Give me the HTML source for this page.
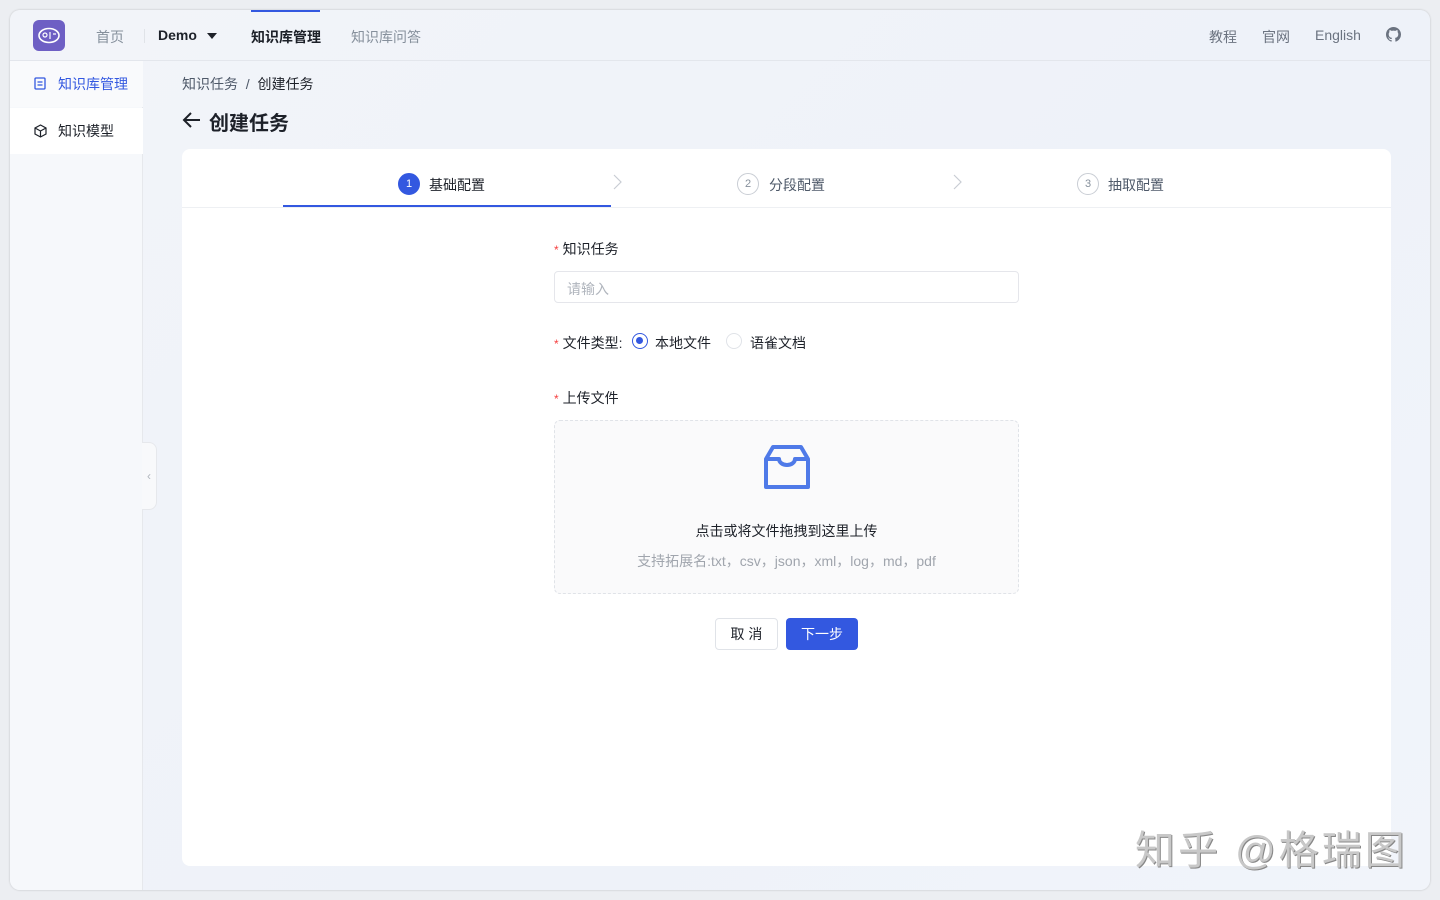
<!DOCTYPE html>
<html><head><meta charset="utf-8"><style>
*{box-sizing:border-box;margin:0;padding:0}
body{width:1440px;height:900px;overflow:hidden;background:#eceef2;font-family:"Liberation Sans","Noto Sans CJK SC",sans-serif;color:#1d2129;position:relative}
.win{position:absolute;left:10px;top:10px;width:1420px;height:880px;border-radius:10px;background:linear-gradient(135deg,#f2f4f9,#eef2f9 60%,#f1f4fa);overflow:hidden;box-shadow:0 0 2px rgba(0,0,0,.2)}
.top{position:absolute;left:0;top:0;width:1420px;height:51px;border-bottom:1px solid #e3e6ec}
.logo{position:absolute;left:23px;top:10px;width:32px;height:31px;border-radius:6px;background:#6e5fc4}
.t{position:absolute;font-size:14px;top:17px}
.side{position:absolute;left:0;top:51px;width:133px;height:829px;background:#f6f8fb;border-right:1px solid #e6e8ec}
.si{position:absolute;left:0;width:133px;height:46px;font-size:14px;line-height:46px;padding-left:48px}
.card{position:absolute;left:172px;top:139px;width:1209px;height:717px;background:#fff;border-radius:8px}
.steps{position:absolute;left:0;top:0;width:1209px;height:59px;border-bottom:1px solid #eef0f3}
.num{position:absolute;width:22px;height:22px;border-radius:50%;font-size:11px;text-align:center;line-height:20px;border:1px solid #c9cdd4;color:#86909c}
.lab{position:absolute;font-size:14px;top:26px}
.red{color:#f53f3f;font-size:12px;margin-right:4px}
.fl{position:absolute;font-size:14px}
</style></head><body>
<div class="win">
 <div class="top">
  <div class="logo"><svg width="32" height="31" viewBox="0 0 32 31"><ellipse cx="16" cy="15.5" rx="10" ry="7" fill="none" stroke="#fff" stroke-width="1.6"/><circle cx="12" cy="15" r="2" fill="none" stroke="#fff" stroke-width="1.2"/><path d="M17 12v7M20 14h3" stroke="#fff" stroke-width="1.2"/></svg></div>
  <div class="t" style="left:86px;color:#86909c">首页</div>
  <div style="position:absolute;left:134px;top:19px;width:1px;height:14px;background:#e0e3e8"></div>
  <div class="t" style="left:148px;font-weight:bold">Demo</div>
  <div style="position:absolute;left:197px;top:23px;border-left:5px solid transparent;border-right:5px solid transparent;border-top:6px solid #1d2129"></div>
  <div style="position:absolute;left:241px;top:0;width:69px;height:2px;background:#3358e0"></div>
  <div class="t" style="left:241px;font-weight:bold">知识库管理</div>
  <div class="t" style="left:341px;color:#86909c">知识库问答</div>
  <div class="t" style="left:1199px;color:#6b7380">教程</div>
  <div class="t" style="left:1252px;color:#6b7380">官网</div>
  <div class="t" style="left:1305px;color:#6b7380">English</div>
  <svg style="position:absolute;left:1376px;top:17px" width="15" height="15" viewBox="0 0 16 16"><path fill="#6b7380" d="M8 0C3.58 0 0 3.58 0 8c0 3.54 2.290 6.53 5.47 7.59.4.07.55-.17.55-.38v-1.330c-2.23.48-2.7-1.08-2.7-1.08-.36-.92-.89-1.17-.89-1.17-.73-.5.05-.49.05-.49.8.06 1.23.83 1.23.83.71 1.22 1.87.87 2.33.66.07-.52.28-.87.5-1.07-1.78-.2-3.64-.89-3.64-3.95 0-.87.31-1.59.82-2.15-.08-.2-.36-1.02.08-2.12 0 0 .67-.21 2.2.82a7.6 7.6 0 014 0c1.53-1.04 2.2-.82 2.2-.82.44 1.1.16 1.92.08 2.12.51.56.82 1.27.82 2.150 0 3.07-1.87 3.75-3.65 3.95.29.25.54.73.54 1.48v2.2c0 .21.15.46.55.38A8 8 0 0016 8c0-4.42-3.58-8-8-8z"/></svg>
 </div>
 <div class="side">
  <div class="si" style="top:0;color:#3358e0;background:#f9fafc"><svg style="position:absolute;left:24px;top:16px" width="12" height="13" viewBox="0 0 12 13"><rect x="1" y="1" width="10" height="11" rx="1" fill="none" stroke="#3358e0" stroke-width="1.3"/><path d="M3.5 5h5M3.5 8h5" stroke="#3358e0" stroke-width="1.2"/></svg>知识库管理</div>
  <div class="si" style="top:47px;background:#fff"><svg style="position:absolute;left:24px;top:16px" width="13" height="14" viewBox="0 0 13 14"><path d="M6.5 1L12 4v6L6.5 13 1 10V4z M1 4l5.5 3L12 4 M6.5 7v6" fill="none" stroke="#1d2129" stroke-width="1.2"/></svg>知识模型</div>
  <div style="position:absolute;left:132px;top:381px;width:15px;height:68px;background:#f8f9fb;border:1px solid #e6e8ec;border-left:none;border-radius:0 8px 8px 0;color:#b0b5bd;font-size:12px;line-height:66px;text-align:center">‹</div>
 </div>
 <div style="position:absolute;left:172px;top:64px;font-size:14px;color:#4e5969">知识任务 &nbsp;/ &nbsp;<span style="color:#1d2129">创建任务</span></div>
 <svg style="position:absolute;left:172px;top:101px" width="20" height="18" viewBox="0 0 20 18"><path d="M18 9H3M9 2L2 9l7 7" fill="none" stroke="#1d2129" stroke-width="2"/></svg>
 <div style="position:absolute;left:199px;top:97px;font-size:20px;font-weight:bold">创建任务</div>
 <div class="card">
  <div class="steps">
   <div class="num" style="left:216px;top:24px;background:#3358e0;border-color:#3358e0;color:#fff">1</div>
   <div class="lab" style="left:247px">基础配置</div>
   <svg style="position:absolute;left:431px;top:25px" width="10" height="16" viewBox="0 0 10 16"><path d="M1 1l7 7-7 7" fill="none" stroke="#c9cdd4" stroke-width="1.2"/></svg>
   <div style="position:absolute;left:101px;top:56px;width:328px;height:2px;background:#3358e0"></div>
   <div class="num" style="left:555px;top:24px">2</div>
   <div class="lab" style="left:587px;color:#4e5969">分段配置</div>
   <svg style="position:absolute;left:771px;top:25px" width="10" height="16" viewBox="0 0 10 16"><path d="M1 1l7 7-7 7" fill="none" stroke="#c9cdd4" stroke-width="1.2"/></svg>
   <div class="num" style="left:895px;top:24px">3</div>
   <div class="lab" style="left:926px;color:#4e5969">抽取配置</div>
  </div>
  <div class="fl" style="left:372px;top:90px"><span class="red">*</span>知识任务</div>
  <div style="position:absolute;left:372px;top:122px;width:465px;height:32px;border:1px solid #e5e6eb;border-radius:4px;font-size:14px;color:#b0b5bd;padding:7px 12px">请输入</div>
  <div class="fl" style="left:372px;top:184px"><span class="red">*</span>文件类型:</div>
  <div style="position:absolute;left:450px;top:184px;width:16px;height:16px;border:1.5px solid #3358e0;border-radius:50%"><div style="margin:3px;width:7px;height:7px;border-radius:50%;background:#3358e0"></div></div>
  <div class="fl" style="left:473px;top:184px">本地文件</div>
  <div style="position:absolute;left:544px;top:184px;width:16px;height:16px;border:1px solid #e0e3e8;border-radius:50%"></div>
  <div class="fl" style="left:568px;top:184px">语雀文档</div>
  <div class="fl" style="left:372px;top:239px"><span class="red">*</span>上传文件</div>
  <div style="position:absolute;left:372px;top:271px;width:465px;height:174px;border:1px dashed #e0e3e8;border-radius:6px;background:#fafafb">
   <svg style="position:absolute;left:208px;top:23px" width="48" height="48" viewBox="0 0 48 48"><path d="M3 15L10 3h28l7 12v28H3z M3 15h13a8 6 0 0 0 16 0h13" fill="none" stroke="#4f7ae8" stroke-width="4" stroke-linejoin="round"/></svg>
   <div style="position:absolute;left:0;width:100%;top:100px;text-align:center;font-size:14px">点击或将文件拖拽到这里上传</div>
   <div style="position:absolute;left:0;width:100%;top:130px;text-align:center;font-size:14px;color:#a0a5ad">支持拓展名:txt，csv，json，xml，log，md，pdf</div>
  </div>
  <div style="position:absolute;left:533px;top:469px;width:63px;height:32px;border:1px solid #e0e3e8;border-radius:4px;font-size:14px;text-align:center;line-height:30px">取 消</div>
  <div style="position:absolute;left:604px;top:469px;width:72px;height:32px;background:#3358e0;border-radius:4px;color:#fff;font-size:14px;text-align:center;line-height:32px">下一步</div>
 </div>
 <div style="position:absolute;left:1125px;top:808px;font-size:40px;letter-spacing:3px;color:#c8c8c8;text-shadow:1px 1px 0 #888;white-space:nowrap">知乎 @格瑞图</div>
</div>
</body></html>
